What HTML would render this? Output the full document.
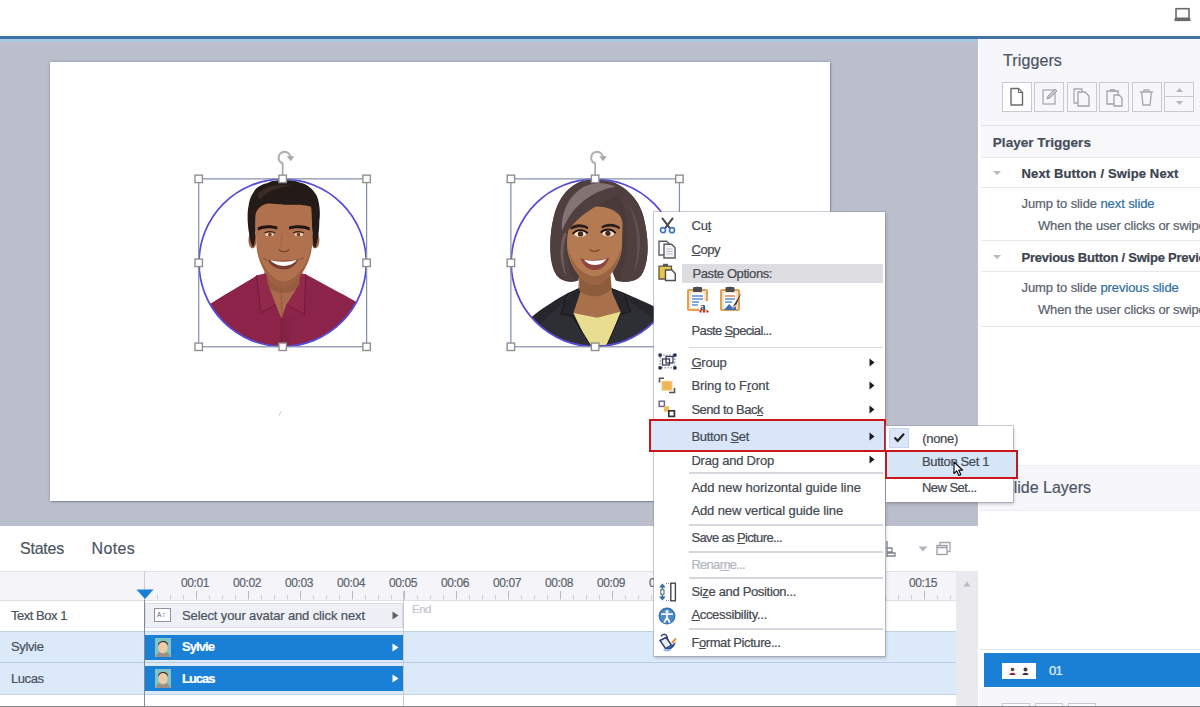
<!DOCTYPE html>
<html><head><meta charset="utf-8"><title>Storyline</title>
<style>
html,body{margin:0;padding:0}
body{width:1200px;height:707px;position:relative;overflow:hidden;background:#fff;font-family:"Liberation Sans", sans-serif;}
.t{position:absolute;white-space:nowrap;line-height:1;-webkit-text-stroke:.22px currentColor;}
.r{position:absolute;}
svg{position:absolute;overflow:visible}
u{text-decoration:underline;text-underline-offset:1px}
</style></head><body>
<div class="r" style="left:0px;top:0px;width:1200px;height:36px;background:#fff;"></div>
<svg style="left:1174px;top:7px" width="17" height="15" viewBox="0 0 17 15"><rect x="2" y="1.7" width="13" height="9.6" fill="none" stroke="#6a6a6a" stroke-width="1.6"/><rect x="0.5" y="11.3" width="16" height="2.8" fill="#6a6a6a"/></svg>
<div class="r" style="left:0px;top:38px;width:978px;height:488px;background:#bbbfcc;"></div>
<div class="r" style="left:0px;top:38.5px;width:978px;height:5px;background:linear-gradient(#a9c8e8 0,#a9c8e8 45%,#bfc0cb 70%,#bbbfcc 100%);"></div>
<div class="r" style="left:0px;top:35.8px;width:1200px;height:3.2px;background:#4172a5;"></div>
<div class="r" style="left:49.6px;top:62.3px;width:780.2px;height:438.9px;background:#fff;box-shadow:0 0 3px rgba(80,85,110,.45), 1px 1px 1px rgba(80,85,110,.35)"></div>
<svg style="left:0;top:0" width="1200" height="707"><g transform="translate(190,140) scale(0.31095)">
<defs><clipPath id="cl"><circle cx="298" cy="395" r="268"/></clipPath></defs>
<g clip-path="url(#cl)">
<!-- shirt -->
<path d="M20 560C60 525 140 482 214 436L372 432C440 470 520 510 580 548V700H20z" fill="#8c2449"/>
<path d="M294 572V700" stroke="#771d3e" stroke-width="4"/>
<path d="M294 572h34l-10 128h-24z" fill="#82203f" opacity=".55"/>
<!-- neck -->
<path d="M240 400h120l2 60-52 70-16 44-18-44-38-70z" fill="#a96b4b"/>
<path d="M244 425c30 42 84 42 114 0l2 40c-30 36-88 36-118 0z" fill="#8a5238" opacity=".6"/>
<path d="M292 470l4 100" stroke="#8f573c" stroke-width="5" opacity=".5"/>
<!-- collar -->
<path d="M214 436L246 428L250 462L276 530L228 556z" fill="#93284d"/>
<path d="M372 432L354 428L352 462L310 530L368 560z" fill="#93284d"/>
<path d="M214 436L228 556L276 530M372 432L368 560L310 530" fill="none" stroke="#73193a" stroke-width="3"/>
<!-- ears -->
<ellipse cx="201" cy="322" rx="13" ry="27" fill="#9c5f42"/>
<ellipse cx="403" cy="322" rx="13" ry="27" fill="#9c5f42"/>
<!-- face -->
<path d="M210 250V190H394V250L392 345C388 395 350 455 318 470C305 476 295 476 284 470C252 455 218 395 214 345z" fill="#b0714f"/>
<path d="M214 330C220 400 255 455 284 470C295 476 305 476 318 470C350 455 386 400 392 330C380 405 340 452 302 456C262 452 226 405 214 330z" fill="#8e5439" opacity=".55"/>
<!-- hair -->
<path d="M190 300C184 270 184 230 188 215C190 195 196 180 202 172C212 150 232 142 250 138C270 126 330 126 350 136C372 140 395 155 408 180C416 200 420 230 416 260C416 290 412 320 404 345L397 345C396 320 394 300 393 290C392 260 392 230 389 215C360 204 330 210 306 208C280 207 262 203 247 205C225 211 213 225 211 240C210 260 211 280 211 292C210 320 208 335 203 345C196 335 192 318 190 300z" fill="#241a17"/>
<path d="M215 175C240 150 280 140 330 146C290 150 250 160 225 192z" fill="#3a2b26"/>
<!-- brows -->
<path d="M217 282C235 272 262 272 281 279L280 288C262 282 238 282 219 291z" fill="#1f1512"/>
<path d="M318 279C338 272 366 272 386 282L384 291C366 282 340 282 319 288z" fill="#1f1512"/>
<!-- eyes -->
<ellipse cx="256" cy="304" rx="14" ry="5.5" fill="#ecd9cc"/>
<ellipse cx="350" cy="304" rx="14" ry="5.5" fill="#ecd9cc"/>
<circle cx="257" cy="304" r="6" fill="#7a4522"/><circle cx="349" cy="304" r="6" fill="#7a4522"/>
<path d="M240 299C250 293 266 293 274 299M332 299C342 293 358 293 366 299" stroke="#3a241a" stroke-width="4" fill="none"/>
<!-- nose -->
<path d="M284 352C292 362 312 362 320 352" stroke="#7c452e" stroke-width="4" fill="none"/>
<path d="M296 300L292 345" stroke="#9a5d40" stroke-width="4" fill="none" opacity=".6"/>
<!-- mouth -->
<path d="M250 384C268 390 334 390 350 382C340 406 322 416 302 416C280 416 260 406 250 384z" fill="#7a3c2c"/>
<path d="M258 387C280 393 324 393 344 385C334 398 318 405 302 405C284 405 268 398 258 387z" fill="#fbfbfb"/>
<path d="M236 380C240 384 244 384 248 386M366 378C362 382 358 382 354 384" stroke="#7c452e" stroke-width="3" fill="none"/>
</g>
<circle cx="298" cy="395" r="269" fill="none" stroke="#574bd6" stroke-width="5.6"/>
<rect x="28" y="125" width="540" height="540" fill="none" stroke="#8592ae" stroke-width="4"/><path d="M298.0 125V73" stroke="#a8a8a8" stroke-width="5.5" fill="none"/><path d="M297.5 75A19 19 0 1 1 323.0 55" stroke="#b2b2b2" stroke-width="7" fill="none"/><path d="M311.0 52h24l-11 16z" fill="#a6a6a6"/><rect x="16" y="113" width="24" height="24" fill="#fff" stroke="#8e8e8e" stroke-width="4.4"/><rect x="286.0" y="113" width="24" height="24" fill="#fff" stroke="#8e8e8e" stroke-width="4.4"/><rect x="556" y="113" width="24" height="24" fill="#fff" stroke="#8e8e8e" stroke-width="4.4"/><rect x="16" y="383.0" width="24" height="24" fill="#fff" stroke="#8e8e8e" stroke-width="4.4"/><rect x="556" y="383.0" width="24" height="24" fill="#fff" stroke="#8e8e8e" stroke-width="4.4"/><rect x="16" y="653" width="24" height="24" fill="#fff" stroke="#8e8e8e" stroke-width="4.4"/><rect x="286.0" y="653" width="24" height="24" fill="#fff" stroke="#8e8e8e" stroke-width="4.4"/><rect x="556" y="653" width="24" height="24" fill="#fff" stroke="#8e8e8e" stroke-width="4.4"/></g></svg>
<svg style="left:0;top:0" width="1200" height="707"><g transform="translate(500,140) scale(0.31095)">
<defs><clipPath id="cs"><circle cx="305" cy="395" r="268"/></clipPath></defs>
<g clip-path="url(#cs)">
<!-- back hair -->
<path d="M300 126C240 126 190 170 172 250C160 310 152 390 182 436C200 458 232 460 252 452L262 400H352L372 452C392 460 436 458 454 436C484 390 478 310 460 240C440 170 372 126 300 126z" fill="#4a3a39"/>
<!-- jacket -->
<path d="M40 640C80 570 170 520 218 492L256 476H356L400 492C440 510 520 540 600 600V700H40z" fill="#26262c"/>
<!-- shirt -->
<path d="M236 556L388 552L346 660H286z" fill="#e9dd92"/>
<!-- neck -->
<path d="M254 410h100l6 80 28 62-76 20-76-16 22-66z" fill="#a9714b"/>
<path d="M254 430c30 40 70 40 100 0l4 50c-30 30-80 30-106 0z" fill="#86573a" opacity=".8"/>
<!-- lapels -->
<path d="M252 478L214 500L196 560L232 566L296 668L300 700H240L120 600z" fill="#2e2e35"/>
<path d="M360 478L398 494L420 552L388 560L340 668L336 700H400L500 580z" fill="#2e2e35"/>
<path d="M252 478L214 500L196 560L232 566L296 668M360 478L398 494L420 552L388 560L340 668" fill="none" stroke="#15151a" stroke-width="3"/>
<!-- face -->
<path d="M214 270C214 200 392 190 394 270L392 350C386 400 350 448 322 462C310 468 298 468 286 462C254 446 222 400 216 350z" fill="#b47b52"/>
<path d="M216 340C224 400 256 446 286 462C298 468 310 468 322 462C350 448 384 400 392 340C378 400 340 436 304 438C266 436 230 400 216 340z" fill="#8f5a3b" opacity=".7"/>
<!-- front hair -->
<path d="M376 176C340 200 270 222 220 290C210 340 214 400 238 450C200 458 174 432 166 380C156 310 166 230 208 176C240 136 300 118 352 132C404 146 446 190 462 250C478 310 482 390 454 436C436 458 402 460 384 450C398 410 412 350 410 300C408 250 398 200 376 176z" fill="#4f3f3e"/>
<path d="M372 150C310 160 235 200 200 292C194 240 218 180 270 150C302 134 346 136 372 150z" fill="#8c7d7c" opacity=".85"/>
<path d="M205 300C190 340 190 400 215 440C200 400 200 340 215 300z" fill="#7a6b6a" opacity=".7"/>
<path d="M408 200C440 250 452 340 430 430C462 360 456 260 408 200z" fill="#6a5a59" opacity=".7"/>
<!-- brows -->
<path d="M226 282C242 268 266 268 284 280L282 287C266 278 246 278 228 289z" fill="#2a1c18"/>
<path d="M326 278C342 266 366 266 386 280L384 287C366 276 344 276 328 285z" fill="#2a1c18"/>
<!-- eyes -->
<ellipse cx="258" cy="302" rx="19" ry="10" fill="#efe2d8"/>
<ellipse cx="348" cy="300" rx="19" ry="10" fill="#efe2d8"/>
<circle cx="259" cy="302" r="8.5" fill="#4a2a16"/><circle cx="347" cy="300" r="8.5" fill="#4a2a16"/>
<path d="M234 302C246 286 270 286 282 300M324 298C336 284 360 284 372 300" stroke="#1a100c" stroke-width="6" fill="none"/>
<!-- nose -->
<path d="M288 352C296 360 312 360 320 352" stroke="#7c452e" stroke-width="4" fill="none"/>
<!-- mouth -->
<path d="M258 380C280 388 330 388 352 378C342 406 324 418 306 418C286 418 268 406 258 380z" fill="#8f4540"/>
<path d="M270 384C290 390 324 390 342 382C334 396 320 402 306 402C292 402 278 396 270 384z" fill="#fbfbfb"/>
</g>
<circle cx="305" cy="395" r="269" fill="none" stroke="#574bd6" stroke-width="5.6"/>
<rect x="35" y="125" width="542" height="540" fill="none" stroke="#8592ae" stroke-width="4"/><path d="M306.0 125V73" stroke="#a8a8a8" stroke-width="5.5" fill="none"/><path d="M305.5 75A19 19 0 1 1 331.0 55" stroke="#b2b2b2" stroke-width="7" fill="none"/><path d="M319.0 52h24l-11 16z" fill="#a6a6a6"/><rect x="23" y="113" width="24" height="24" fill="#fff" stroke="#8e8e8e" stroke-width="4.4"/><rect x="294.0" y="113" width="24" height="24" fill="#fff" stroke="#8e8e8e" stroke-width="4.4"/><rect x="565" y="113" width="24" height="24" fill="#fff" stroke="#8e8e8e" stroke-width="4.4"/><rect x="23" y="383.0" width="24" height="24" fill="#fff" stroke="#8e8e8e" stroke-width="4.4"/><rect x="565" y="383.0" width="24" height="24" fill="#fff" stroke="#8e8e8e" stroke-width="4.4"/><rect x="23" y="653" width="24" height="24" fill="#fff" stroke="#8e8e8e" stroke-width="4.4"/><rect x="294.0" y="653" width="24" height="24" fill="#fff" stroke="#8e8e8e" stroke-width="4.4"/><rect x="565" y="653" width="24" height="24" fill="#fff" stroke="#8e8e8e" stroke-width="4.4"/></g></svg>
<svg style="left:278px;top:411px" width="4" height="5"><path d="M3 0.5L1 4.5" stroke="#c9c9d0" stroke-width="1"/></svg>
<div class="r" style="left:978px;top:38.5px;width:222px;height:669px;background:#fff;"></div>
<div class="r" style="left:979px;top:38.5px;width:221px;height:87px;background:#f6f6fb;"></div>
<div class="t" style="left:1003.0px;top:53.4px;font-size:16px;color:#4d5765;letter-spacing:0.11px;">Triggers</div>
<div class="r" style="left:1001.5px;top:81.5px;width:30px;height:30px;background:#fff;border:1px solid #c9cad2;box-sizing:border-box"></div>
<div class="r" style="left:1034px;top:81.5px;width:30px;height:30px;background:#f7f7fa;border:1px solid #c9cad2;box-sizing:border-box"></div>
<div class="r" style="left:1066.5px;top:81.5px;width:30px;height:30px;background:#f7f7fa;border:1px solid #c9cad2;box-sizing:border-box"></div>
<div class="r" style="left:1099px;top:81.5px;width:30px;height:30px;background:#f7f7fa;border:1px solid #c9cad2;box-sizing:border-box"></div>
<div class="r" style="left:1131.5px;top:81.5px;width:30px;height:30px;background:#f7f7fa;border:1px solid #c9cad2;box-sizing:border-box"></div>
<div class="r" style="left:1164px;top:81.5px;width:30px;height:30px;background:#f7f7fa;border:1px solid #c9cad2;box-sizing:border-box"></div>
<svg style="left:1002px;top:82px" width="29" height="29" viewBox="0 0 29 29"><path d="M9 6.5h7.5l4 4V23H9z" fill="#fff" stroke="#6a6a6a" stroke-width="1.4" stroke-linejoin="round"/><path d="M16.5 6.5v4h4" fill="none" stroke="#6a6a6a" stroke-width="1.1"/></svg>
<svg style="left:1034.5px;top:82px" width="29" height="29" viewBox="0 0 29 29"><rect x="8" y="8" width="12" height="14" fill="none" stroke="#a9abb3" stroke-width="1.3"/><path d="M12 17l1-3 7-7 2 2-7 7z" fill="#c4c6cc" stroke="#9a9ca6" stroke-width="1"/></svg>
<svg style="left:1067px;top:82px" width="29" height="29" viewBox="0 0 29 29"><path d="M7 7h8v14H7z" fill="none" stroke="#a9abb3" stroke-width="1.3"/><path d="M11 10h7l4 4v10H11z" fill="#f7f7fa" stroke="#a0a2ab" stroke-width="1.3"/></svg>
<svg style="left:1099.5px;top:82px" width="29" height="29" viewBox="0 0 29 29"><path d="M7 9h11v13H7z" fill="none" stroke="#a0a2ab" stroke-width="1.3"/><rect x="10" y="7" width="5" height="3" fill="#a9abb3"/><path d="M14 13h5l3 3v8h-8z" fill="#f7f7fa" stroke="#a0a2ab" stroke-width="1.3"/></svg>
<svg style="left:1132px;top:82px" width="29" height="29" viewBox="0 0 29 29"><path d="M8 10h13M12 10V8h5v2M9.5 10l1.5 13h7l1.5-13" fill="none" stroke="#a9abb3" stroke-width="1.4"/></svg>
<svg style="left:1164.5px;top:82px" width="29" height="29" viewBox="0 0 29 29"><path d="M0 14.5h29" stroke="#c9cad2" stroke-width="1"/><path d="M11 10l3.5-4 3.5 4z" fill="#b4b6be"/><path d="M11 19l3.5 4 3.5-4z" fill="#b4b6be"/></svg>
<div class="r" style="left:981px;top:125px;width:219px;height:1px;background:#e3e4ea;"></div>
<div class="r" style="left:981px;top:126px;width:219px;height:31px;background:#f8f8fb;"></div>
<div class="r" style="left:981px;top:157px;width:219px;height:1px;background:#e6e7ec;"></div>
<div class="t" style="left:992.8px;top:135.6px;font-size:13.5px;color:#46505c;letter-spacing:0.04px;font-weight:700;">Player Triggers</div>
<div class="r" style="left:981px;top:187px;width:219px;height:1px;background:#e6e7ec;"></div>
<div class="r" style="left:981px;top:240px;width:219px;height:1px;background:#e6e7ec;"></div>
<div class="r" style="left:981px;top:271px;width:219px;height:1px;background:#e6e7ec;"></div>
<div class="r" style="left:981px;top:325.5px;width:219px;height:1px;background:#e6e7ec;"></div>
<svg style="left:992px;top:170px" width="10" height="6"><path d="M1 1h8L5 5z" fill="#b8bac2"/></svg>
<svg style="left:992px;top:254px" width="10" height="6"><path d="M1 1h8L5 5z" fill="#b8bac2"/></svg>
<div class="t" style="left:1021.6px;top:167.0px;font-size:13px;color:#3c4450;letter-spacing:0.13px;font-weight:700;">Next Button / Swipe Next</div>
<div class="t" style="left:1021.5px;top:197.0px;font-size:13px;color:#5a626e;letter-spacing:-0.09px;">Jump to slide <span style="color:#2f6fa5">next slide</span></div>
<div class="t" style="left:1038.0px;top:218.5px;font-size:13px;color:#5a626e;letter-spacing:-0.15px;">When the user clicks or swipes</div>
<div class="t" style="left:1021.6px;top:251.0px;font-size:13px;color:#3c4450;letter-spacing:-0.25px;font-weight:700;">Previous Button / Swipe Previous</div>
<div class="t" style="left:1021.5px;top:280.5px;font-size:13px;color:#5a626e;letter-spacing:-0.09px;">Jump to slide <span style="color:#2f6fa5">previous slide</span></div>
<div class="t" style="left:1038.0px;top:302.5px;font-size:13px;color:#5a626e;letter-spacing:-0.15px;">When the user clicks or swipes</div>
<div class="r" style="left:979px;top:465.5px;width:221px;height:44.5px;background:#f6f6fb;"></div>
<div class="r" style="left:979px;top:465px;width:221px;height:1px;background:#ececf2;"></div>
<div class="r" style="left:979px;top:510px;width:221px;height:1px;background:#ececf2;"></div>
<div class="t" style="left:1003.0px;top:480.1px;font-size:16px;color:#4d5765;letter-spacing:-0.00px;">Slide Layers</div>
<div class="r" style="left:979px;top:649px;width:221px;height:1px;background:#e3e4ea;"></div>
<div class="r" style="left:983.5px;top:653px;width:217px;height:34px;background:#1a80d5;"></div>
<div class="r" style="left:1002px;top:662.5px;width:33.5px;height:16.5px;background:#fff;"></div>
<svg style="left:1002px;top:662.5px" width="34" height="17"><circle cx="10.5" cy="6.5" r="1.8" fill="#6a3a2a"/><path d="M7.5 12c0-3 6-3 6 0z" fill="#8a2346"/><circle cx="23.5" cy="6.5" r="2" fill="#4a3a38"/><path d="M20.5 12c0-3 6-3 6 0z" fill="#333"/></svg>
<div class="t" style="left:1049.0px;top:664.0px;font-size:13px;color:#e8f2fc;letter-spacing:-0.73px;">01</div>
<div class="r" style="left:979px;top:688px;width:221px;height:19px;background:#f7f7fb;"></div>
<div class="r" style="left:1002px;top:702.5px;width:28px;height:6px;background:#fbfbfd;border:1px solid #c9cad2;box-sizing:border-box"></div>
<div class="r" style="left:1035px;top:702.5px;width:28px;height:6px;background:#fbfbfd;border:1px solid #c9cad2;box-sizing:border-box"></div>
<div class="r" style="left:1068px;top:702.5px;width:28px;height:6px;background:#fbfbfd;border:1px solid #c9cad2;box-sizing:border-box"></div>
<div class="r" style="left:0px;top:526px;width:978px;height:181px;background:#fff;"></div>
<div class="t" style="left:20.0px;top:541.0px;font-size:16px;color:#4d5765;letter-spacing:-0.23px;">States</div>
<div class="t" style="left:91.5px;top:541.0px;font-size:16px;color:#4d5765;letter-spacing:0.34px;">Notes</div>
<div class="r" style="left:0px;top:570.5px;width:956px;height:1px;background:#e1e2e8;"></div>
<div class="r" style="left:0px;top:571.5px;width:956px;height:28.5px;background:#f5f5f9;"></div>
<div class="r" style="left:0px;top:600px;width:956px;height:1px;background:#dfe0e6;"></div>
<div class="r" style="left:0px;top:631px;width:956px;height:31.5px;background:#dbe9f9;"></div>
<div class="r" style="left:0px;top:662.5px;width:956px;height:31.5px;background:#dbe9f9;"></div>
<div class="r" style="left:0px;top:630.5px;width:956px;height:1px;background:#c3d3e6;"></div>
<div class="r" style="left:0px;top:662px;width:956px;height:1px;background:#b9cbe2;"></div>
<div class="r" style="left:0px;top:693.5px;width:956px;height:1px;background:#c3d3e6;"></div>
<div class="r" style="left:956px;top:571px;width:22px;height:136px;background:#e9e9ee;"></div>
<svg style="left:962px;top:580px" width="10" height="8"><path d="M1.5 6.5L5 1.5l3.5 5z" fill="#b9bbc3"/></svg>
<div class="r" style="left:144px;top:571px;width:1px;height:29px;background:#c9ccd6;"></div>
<div class="r" style="left:144px;top:600px;width:1px;height:107px;background:#7f8a9c;"></div>
<svg style="left:0;top:0" width="978" height="707"><path d="M144.5 591v8.5" stroke="#b7bac3" stroke-width="1"/><path d="M157.5 595v4.5" stroke="#c9ccd4" stroke-width="1"/><path d="M170.5 595v4.5" stroke="#c9ccd4" stroke-width="1"/><path d="M183.5 595v4.5" stroke="#c9ccd4" stroke-width="1"/><path d="M196.5 591v8.5" stroke="#b7bac3" stroke-width="1"/><path d="M209.5 595v4.5" stroke="#c9ccd4" stroke-width="1"/><path d="M222.5 595v4.5" stroke="#c9ccd4" stroke-width="1"/><path d="M235.5 595v4.5" stroke="#c9ccd4" stroke-width="1"/><path d="M248.5 591v8.5" stroke="#b7bac3" stroke-width="1"/><path d="M261.5 595v4.5" stroke="#c9ccd4" stroke-width="1"/><path d="M274.5 595v4.5" stroke="#c9ccd4" stroke-width="1"/><path d="M287.5 595v4.5" stroke="#c9ccd4" stroke-width="1"/><path d="M300.5 591v8.5" stroke="#b7bac3" stroke-width="1"/><path d="M313.5 595v4.5" stroke="#c9ccd4" stroke-width="1"/><path d="M326.5 595v4.5" stroke="#c9ccd4" stroke-width="1"/><path d="M339.5 595v4.5" stroke="#c9ccd4" stroke-width="1"/><path d="M352.5 591v8.5" stroke="#b7bac3" stroke-width="1"/><path d="M365.5 595v4.5" stroke="#c9ccd4" stroke-width="1"/><path d="M378.5 595v4.5" stroke="#c9ccd4" stroke-width="1"/><path d="M391.5 595v4.5" stroke="#c9ccd4" stroke-width="1"/><path d="M404.5 591v8.5" stroke="#b7bac3" stroke-width="1"/><path d="M417.5 595v4.5" stroke="#c9ccd4" stroke-width="1"/><path d="M430.5 595v4.5" stroke="#c9ccd4" stroke-width="1"/><path d="M443.5 595v4.5" stroke="#c9ccd4" stroke-width="1"/><path d="M456.5 591v8.5" stroke="#b7bac3" stroke-width="1"/><path d="M469.5 595v4.5" stroke="#c9ccd4" stroke-width="1"/><path d="M482.5 595v4.5" stroke="#c9ccd4" stroke-width="1"/><path d="M495.5 595v4.5" stroke="#c9ccd4" stroke-width="1"/><path d="M508.5 591v8.5" stroke="#b7bac3" stroke-width="1"/><path d="M521.5 595v4.5" stroke="#c9ccd4" stroke-width="1"/><path d="M534.5 595v4.5" stroke="#c9ccd4" stroke-width="1"/><path d="M547.5 595v4.5" stroke="#c9ccd4" stroke-width="1"/><path d="M560.5 591v8.5" stroke="#b7bac3" stroke-width="1"/><path d="M573.5 595v4.5" stroke="#c9ccd4" stroke-width="1"/><path d="M586.5 595v4.5" stroke="#c9ccd4" stroke-width="1"/><path d="M599.5 595v4.5" stroke="#c9ccd4" stroke-width="1"/><path d="M612.5 591v8.5" stroke="#b7bac3" stroke-width="1"/><path d="M625.5 595v4.5" stroke="#c9ccd4" stroke-width="1"/><path d="M638.5 595v4.5" stroke="#c9ccd4" stroke-width="1"/><path d="M651.5 595v4.5" stroke="#c9ccd4" stroke-width="1"/><path d="M664.5 591v8.5" stroke="#b7bac3" stroke-width="1"/><path d="M677.5 595v4.5" stroke="#c9ccd4" stroke-width="1"/><path d="M690.5 595v4.5" stroke="#c9ccd4" stroke-width="1"/><path d="M703.5 595v4.5" stroke="#c9ccd4" stroke-width="1"/><path d="M716.5 591v8.5" stroke="#b7bac3" stroke-width="1"/><path d="M729.5 595v4.5" stroke="#c9ccd4" stroke-width="1"/><path d="M742.5 595v4.5" stroke="#c9ccd4" stroke-width="1"/><path d="M755.5 595v4.5" stroke="#c9ccd4" stroke-width="1"/><path d="M768.5 591v8.5" stroke="#b7bac3" stroke-width="1"/><path d="M781.5 595v4.5" stroke="#c9ccd4" stroke-width="1"/><path d="M794.5 595v4.5" stroke="#c9ccd4" stroke-width="1"/><path d="M807.5 595v4.5" stroke="#c9ccd4" stroke-width="1"/><path d="M820.5 591v8.5" stroke="#b7bac3" stroke-width="1"/><path d="M833.5 595v4.5" stroke="#c9ccd4" stroke-width="1"/><path d="M846.5 595v4.5" stroke="#c9ccd4" stroke-width="1"/><path d="M859.5 595v4.5" stroke="#c9ccd4" stroke-width="1"/><path d="M872.5 591v8.5" stroke="#b7bac3" stroke-width="1"/><path d="M885.5 595v4.5" stroke="#c9ccd4" stroke-width="1"/><path d="M898.5 595v4.5" stroke="#c9ccd4" stroke-width="1"/><path d="M911.5 595v4.5" stroke="#c9ccd4" stroke-width="1"/><path d="M924.5 591v8.5" stroke="#b7bac3" stroke-width="1"/><path d="M937.5 595v4.5" stroke="#c9ccd4" stroke-width="1"/><path d="M950.5 595v4.5" stroke="#c9ccd4" stroke-width="1"/></svg>
<div class="t" style="left:181.0px;top:577.3px;font-size:12px;color:#5d6570;letter-spacing:-0.41px;">00:01</div>
<div class="t" style="left:233.0px;top:577.3px;font-size:12px;color:#5d6570;letter-spacing:-0.41px;">00:02</div>
<div class="t" style="left:285.0px;top:577.3px;font-size:12px;color:#5d6570;letter-spacing:-0.41px;">00:03</div>
<div class="t" style="left:337.0px;top:577.3px;font-size:12px;color:#5d6570;letter-spacing:-0.41px;">00:04</div>
<div class="t" style="left:389.0px;top:577.3px;font-size:12px;color:#5d6570;letter-spacing:-0.41px;">00:05</div>
<div class="t" style="left:441.0px;top:577.3px;font-size:12px;color:#5d6570;letter-spacing:-0.41px;">00:06</div>
<div class="t" style="left:493.0px;top:577.3px;font-size:12px;color:#5d6570;letter-spacing:-0.41px;">00:07</div>
<div class="t" style="left:545.0px;top:577.3px;font-size:12px;color:#5d6570;letter-spacing:-0.41px;">00:08</div>
<div class="t" style="left:597.0px;top:577.3px;font-size:12px;color:#5d6570;letter-spacing:-0.41px;">00:09</div>
<div class="t" style="left:909.0px;top:577.3px;font-size:12px;color:#5d6570;letter-spacing:-0.41px;">00:15</div>
<div class="t" style="left:649.0px;top:577.3px;font-size:12px;color:#5d6570;letter-spacing:-0.41px;">00:10</div>
<div class="r" style="left:402.5px;top:591px;width:1px;height:116px;background:#c6c9d2;"></div>
<div class="t" style="left:412.0px;top:603.8px;font-size:11.5px;color:#c3c6ce;letter-spacing:-0.49px;">End</div>
<svg style="left:136px;top:589px" width="18" height="11"><path d="M0.5 0.5h17L9 10z" fill="#1a7fd4"/></svg>
<div class="t" style="left:11.0px;top:609.0px;font-size:13px;color:#4b535f;letter-spacing:-0.47px;">Text Box 1</div>
<div class="t" style="left:11.0px;top:640.0px;font-size:13px;color:#4b535f;letter-spacing:-0.36px;">Sylvie</div>
<div class="t" style="left:11.0px;top:671.5px;font-size:13px;color:#4b535f;letter-spacing:-0.44px;">Lucas</div>
<div class="r" style="left:145px;top:602.5px;width:257.5px;height:25.5px;background:#eef0f6;border:1px solid #d9dce5;box-sizing:border-box"></div>
<div class="r" style="left:145px;top:634.5px;width:257.5px;height:25px;background:#1a80d5;"></div>
<div class="r" style="left:145px;top:665.8px;width:257.5px;height:25px;background:#1a80d5;"></div>
<svg style="left:154px;top:608px" width="17" height="14"><rect x="0.5" y="0.5" width="16" height="13" fill="#fdfdfe" stroke="#8b92a0"/><text x="3" y="9" font-family="Liberation Sans, sans-serif" font-size="6.5" fill="#5a6270">A</text><path d="M9 5.5h1.5M9 8h1.5" stroke="#8b92a0" stroke-width="1"/></svg>
<div class="t" style="left:182.0px;top:609.0px;font-size:13px;color:#4b535f;letter-spacing:-0.13px;">Select your avatar and click next</div>
<div class="t" style="left:182.0px;top:640.0px;font-size:13px;color:#fff;letter-spacing:-0.93px;font-weight:700;">Sylvie</div>
<div class="t" style="left:182.0px;top:671.5px;font-size:13px;color:#fff;letter-spacing:-1.01px;font-weight:700;">Lucas</div>
<svg style="left:154.5px;top:637.5px" width="16" height="19" viewBox="0 0 16 19"><rect width="16" height="19" fill="#7fc4c9"/><path d="M1 19c0-4 3-5 7-5s7 1 7 5z" fill="#9b8f86"/><ellipse cx="8" cy="9.5" rx="4.6" ry="6" fill="#f2c9a5"/><path d="M3 8c-1-6 11-7 10 0-1-3-3-4-5-4s-4 1-5 4z" fill="#3a2a22"/></svg>
<svg style="left:154.5px;top:668.5px" width="16" height="19" viewBox="0 0 16 19"><rect width="16" height="19" fill="#7fc4c9"/><path d="M1 19c0-4 3-5 7-5s7 1 7 5z" fill="#9b8f86"/><ellipse cx="8" cy="9.5" rx="4.6" ry="6" fill="#f2c9a5"/><path d="M3 8c-1-6 11-7 10 0-1-3-3-4-5-4s-4 1-5 4z" fill="#3a2a22"/></svg>
<svg style="left:391.5px;top:611.0px" width="7" height="9"><path d="M0.5 0.5v8l6-4z" fill="#5a6270"/></svg>
<svg style="left:391.5px;top:642.5px" width="7" height="9"><path d="M0.5 0.5v8l6-4z" fill="#fff"/></svg>
<svg style="left:391.5px;top:673.5px" width="7" height="9"><path d="M0.5 0.5v8l6-4z" fill="#fff"/></svg>
<svg style="left:886px;top:540px" width="10" height="18"><path d="M1 1v16M1 8h5v4H1M1 13h8v3H1" fill="none" stroke="#7d8490" stroke-width="1.3"/></svg>
<svg style="left:918px;top:546px" width="10" height="6"><path d="M0.5 0.5h9L5 5.5z" fill="#b0b3bb"/></svg>
<svg style="left:936px;top:541px" width="15" height="15"><path d="M4 4V1.5h10v9h-3" fill="none" stroke="#a4a7b0" stroke-width="1.3"/><rect x="1" y="4.5" width="10" height="9" fill="#fff" stroke="#9a9da6" stroke-width="1.3"/><path d="M1 6.5h10" stroke="#9a9da6" stroke-width="1.5"/></svg>
<div class="r" style="left:653.5px;top:212px;width:231.5px;height:443.5px;background:#fff;box-shadow:0 0 0 1px rgba(140,145,160,.45), 1px 2px 3px rgba(0,0,0,.22)"></div>
<div class="r" style="left:681.5px;top:264px;width:201px;height:19px;background:#dddde1;"></div>
<div class="r" style="left:689px;top:346.8px;width:194px;height:1.4px;background:#d6d7dd;"></div>
<div class="r" style="left:689px;top:472.3px;width:194px;height:1.4px;background:#d6d7dd;"></div>
<div class="r" style="left:689px;top:524.3px;width:194px;height:1.4px;background:#d6d7dd;"></div>
<div class="r" style="left:689px;top:551.3px;width:194px;height:1.4px;background:#d6d7dd;"></div>
<div class="r" style="left:689px;top:577.3px;width:194px;height:1.4px;background:#d6d7dd;"></div>
<div class="r" style="left:689px;top:628.3px;width:194px;height:1.4px;background:#d6d7dd;"></div>
<div class="r" style="left:649px;top:419px;width:237px;height:33px;background:#d9e6f9;border:2.5px solid #c9151c;box-sizing:border-box"></div>
<div class="t" style="left:691.6px;top:219.3px;font-size:13px;color:#454a52;letter-spacing:-0.28px;">Cu<u>t</u></div>
<div class="t" style="left:691.6px;top:243.0px;font-size:13px;color:#454a52;letter-spacing:-0.49px;"><u>C</u>opy</div>
<div class="t" style="left:692.5px;top:266.6px;font-size:13px;color:#454a52;letter-spacing:-0.41px;">Paste Options:</div>
<div class="t" style="left:691.6px;top:324.4px;font-size:13px;color:#454a52;letter-spacing:-0.65px;">Paste <u>S</u>pecial...</div>
<div class="t" style="left:691.4px;top:355.8px;font-size:13px;color:#454a52;letter-spacing:-0.23px;"><u>G</u>roup</div>
<div class="t" style="left:691.4px;top:379.2px;font-size:13px;color:#454a52;letter-spacing:-0.08px;">Bring to F<u>r</u>ont</div>
<div class="t" style="left:691.4px;top:403.0px;font-size:13px;color:#454a52;letter-spacing:-0.48px;">Send to Bac<u>k</u></div>
<div class="t" style="left:691.4px;top:429.8px;font-size:13px;color:#454a52;letter-spacing:-0.31px;">Button <u>S</u>et</div>
<div class="t" style="left:691.4px;top:453.6px;font-size:13px;color:#454a52;letter-spacing:-0.21px;">Drag and Drop</div>
<div class="t" style="left:691.4px;top:480.6px;font-size:13px;color:#454a52;letter-spacing:-0.01px;">Add new horizontal guide line</div>
<div class="t" style="left:691.4px;top:503.8px;font-size:13px;color:#454a52;letter-spacing:-0.11px;">Add new vertical guide line</div>
<div class="t" style="left:691.4px;top:531.4px;font-size:13px;color:#454a52;letter-spacing:-0.63px;">Save as <u>P</u>icture...</div>
<div class="t" style="left:691.4px;top:557.8px;font-size:13px;color:#b4b7bf;letter-spacing:-0.71px;">Rena<u>m</u>e...</div>
<div class="t" style="left:691.4px;top:584.7px;font-size:13px;color:#454a52;letter-spacing:-0.33px;">Si<u>z</u>e and Position...</div>
<div class="t" style="left:691.4px;top:607.8px;font-size:13px;color:#454a52;letter-spacing:-0.32px;"><u>A</u>ccessibility...</div>
<div class="t" style="left:691.4px;top:636.0px;font-size:13px;color:#454a52;letter-spacing:-0.41px;">F<u>o</u>rmat Picture...</div>
<svg style="left:869px;top:357.5px" width="6" height="9"><path d="M0.5 0.5v8l5-4z" fill="#1b1b1f"/></svg>
<svg style="left:869px;top:381.0px" width="6" height="9"><path d="M0.5 0.5v8l5-4z" fill="#1b1b1f"/></svg>
<svg style="left:869px;top:404.5px" width="6" height="9"><path d="M0.5 0.5v8l5-4z" fill="#1b1b1f"/></svg>
<svg style="left:869px;top:431.5px" width="6" height="9"><path d="M0.5 0.5v8l5-4z" fill="#1b1b1f"/></svg>
<svg style="left:869px;top:455.0px" width="6" height="9"><path d="M0.5 0.5v8l5-4z" fill="#1b1b1f"/></svg>
<div class="r" style="left:885.5px;top:426px;width:127.5px;height:76px;background:#fff;box-shadow:0 0 0 1px rgba(140,145,160,.45), 1px 2px 3px rgba(0,0,0,.22)"></div>
<div class="r" style="left:889px;top:428px;width:20px;height:19.5px;background:#dbe7f8;border:1px solid #c5d6ee;box-sizing:border-box"></div>
<svg style="left:893px;top:432px" width="13" height="11"><path d="M1.5 5.5l3.2 3.3L11 1.8" fill="none" stroke="#222" stroke-width="2.2"/></svg>
<div class="r" style="left:884.5px;top:450px;width:133px;height:28.5px;background:#d7e5f9;border:2.5px solid #c9151c;box-sizing:border-box"></div>
<div class="t" style="left:922.2px;top:431.7px;font-size:13px;color:#454a52;letter-spacing:-0.30px;">(none)</div>
<div class="t" style="left:922.0px;top:454.7px;font-size:13px;color:#454a52;letter-spacing:-0.38px;">Button Set 1</div>
<div class="t" style="left:922.0px;top:481.4px;font-size:13px;color:#454a52;letter-spacing:-0.54px;">New Set...</div>
<svg style="left:953px;top:461px" width="12" height="16" viewBox="0 0 12 16"><path d="M1 1v11.5l2.8-2.6 2 4.6 2-.9-2-4.4h3.8z" fill="#fff" stroke="#111" stroke-width="1.2" stroke-linejoin="round"/></svg>
<svg style="left:659px;top:217px" width="17" height="17" viewBox="0 0 17 17"><path d="M3 0.8L11.2 11.6M14 0.8L5.8 11.6" stroke="#4a4a4e" stroke-width="2" fill="none"/><circle cx="4" cy="13.2" r="2.5" fill="none" stroke="#3f78be" stroke-width="1.7"/><circle cx="13" cy="13.2" r="2.5" fill="none" stroke="#3f78be" stroke-width="1.7"/></svg>
<svg style="left:658px;top:240px" width="19" height="19" viewBox="0 0 19 19"><path d="M1 1.2h7.5l3 3V15H1z" fill="#fff" stroke="#5a5c62" stroke-width="1.4"/><path d="M6 4.2h7.5l3.6 3.6V18H6z" fill="#f4f4f8" stroke="#5a5c62" stroke-width="1.4"/><path d="M8.5 9h6M8.5 11.5h6M8.5 14h6" stroke="#b9bbc4" stroke-width="1"/></svg>
<svg style="left:658px;top:263px" width="19" height="19" viewBox="0 0 19 19"><rect x="5" y="0.8" width="5" height="3.4" fill="#55575d"/><path d="M1 3.2h12.5V16H1z" fill="#e6c64f" stroke="#5a5640" stroke-width="1.3"/><path d="M7.5 7h6.3l3.5 3.5V17.5H7.5z" fill="#fff" stroke="#4e5056" stroke-width="1.4"/></svg>
<svg style="left:686px;top:286px" width="25" height="27" viewBox="0 0 25 27"><rect x="2" y="4" width="19" height="20" rx="1" fill="#f6e3c4" stroke="#e3a052" stroke-width="2"/><rect x="5" y="7" width="13" height="15" fill="#fff"/><rect x="7" y="1" width="9" height="5" rx="1" fill="#4c4c52"/><circle cx="11.5" cy="2" r="1.5" fill="#4c4c52"/><path d="M6 10h11M6 13h11M6 16h8M6 19h6" stroke="#5b8fd0" stroke-width="1.6"/><rect x="13" y="15" width="9" height="9" fill="#fff"/><text x="14" y="23.5" font-family="Liberation Serif, serif" font-weight="700" font-size="11" fill="#2c3b57">a</text><path d="M13.5 25.5h2M17 25.5h2M20.5 25.5h2" stroke="#c9151c" stroke-width="1.8"/></svg>
<svg style="left:719px;top:286px" width="25" height="27" viewBox="0 0 25 27"><rect x="2" y="4" width="18" height="20" rx="1" fill="#f6e3c4" stroke="#e3a052" stroke-width="2"/><rect x="5" y="7" width="12" height="15" fill="#fff"/><rect x="6.5" y="1" width="9" height="5" rx="1" fill="#4c4c52"/><circle cx="11" cy="2" r="1.5" fill="#4c4c52"/><path d="M6 10h10" stroke="#e48a7a" stroke-width="1.6"/><path d="M6 13h10M6 16h7" stroke="#5b8fd0" stroke-width="1.6"/><path d="M5 24l5-6 4 4 3-2v4z" fill="#3b6fc2"/><path d="M22.5 6.5L16 17l-2.5 4 4-2.5z" fill="#3b3b40"/><path d="M14 20l-1.5 3 3-1.5z" fill="#e3a052"/></svg>
<svg style="left:658px;top:353px" width="19" height="17" viewBox="0 0 19 17"><rect x="2.2" y="2.2" width="14.6" height="12.6" fill="none" stroke="#6f7686" stroke-width="1" stroke-dasharray="1.5 1.5"/><rect x="4.5" y="6" width="7" height="6" fill="none" stroke="#3b3f58" stroke-width="1.3"/><rect x="8" y="3.5" width="7" height="6.5" fill="none" stroke="#3b3f58" stroke-width="1.3"/><g fill="#1c2748"><rect x="0.5" y="0.5" width="3.2" height="3.2"/><rect x="15.3" y="0.5" width="3.2" height="3.2"/><rect x="0.5" y="13.3" width="3.2" height="3.2"/><rect x="15.3" y="13.3" width="3.2" height="3.2"/></g></svg>
<svg style="left:658px;top:377px" width="18" height="17" viewBox="0 0 18 17"><path d="M1.5 5.5V1.2H6M16.5 11v4.5H11" fill="none" stroke="#50535c" stroke-width="1.6"/><rect x="4" y="4.2" width="10" height="9" fill="#f0b458"/><rect x="4" y="4.2" width="10" height="9" fill="none" stroke="#f6cf8f" stroke-width="1"/></svg>
<svg style="left:658px;top:400px" width="18" height="18" viewBox="0 0 18 18"><rect x="1.2" y="1.2" width="5.2" height="5.2" fill="#fff" stroke="#6f6686" stroke-width="1.5"/><rect x="6" y="6.2" width="5" height="5.5" fill="#f0bc5c"/><rect x="10.8" y="10.8" width="5.6" height="5.6" fill="#fff" stroke="#33363f" stroke-width="1.7"/></svg>
<svg style="left:658px;top:582px" width="19" height="20" viewBox="0 0 19 20"><path d="M1 5.5l3.4-4 3.4 4zM1 14.5l3.4 4 3.4-4z" fill="#3a69a9"/><path d="M4.4 5v2M4.4 13v2" stroke="#3a69a9" stroke-width="1.6"/><rect x="2.8" y="7.8" width="3.2" height="4.4" fill="none" stroke="#555962" stroke-width="1"/><path d="M8 1.5h5M8 18.5h5" stroke="#8a8e98" stroke-width="1" stroke-dasharray="1 1"/><rect x="12.8" y="1.2" width="4.6" height="17.6" fill="#fff" stroke="#44474f" stroke-width="1.4"/></svg>
<svg style="left:658px;top:607px" width="18" height="18" viewBox="0 0 18 18"><circle cx="9" cy="9" r="8.4" fill="#4d8bc9"/><circle cx="9" cy="9" r="7.6" fill="none" stroke="#3b75b3" stroke-width="1.4"/><circle cx="9" cy="4.6" r="1.6" fill="#fff"/><path d="M3.8 7.2h10.4M9 7v4M9 10.5l-2.6 4.6M9 10.5l2.6 4.6" stroke="#fff" stroke-width="1.7" fill="none" stroke-linecap="round"/></svg>
<svg style="left:658px;top:633px" width="19" height="19" viewBox="0 0 19 19"><path d="M3 3.5c1.5-3 5-3 6 0l1 4" fill="none" stroke="#2f4a86" stroke-width="1.5"/><path d="M2 7.5l6-3 5.5 7.5-6 3.5z" fill="#e9eef8" stroke="#2b3f74" stroke-width="1.4"/><path d="M7 15.5c3 2 7 1 9.5-3l1.5-3.5-3 2c-2 3-5 4-8 4.500z" fill="#274f9a"/><path d="M14 10l4-4.500" stroke="#e1963c" stroke-width="2.2"/><path d="M5.500 16.500c2 1.500 5 1.500 7 0" stroke="#7fb0e8" stroke-width="1.400" fill="none"/></svg>
<div class="r" style="left:0px;top:705.6px;width:1200px;height:1.4px;background:#858588;"></div>
</body></html>
